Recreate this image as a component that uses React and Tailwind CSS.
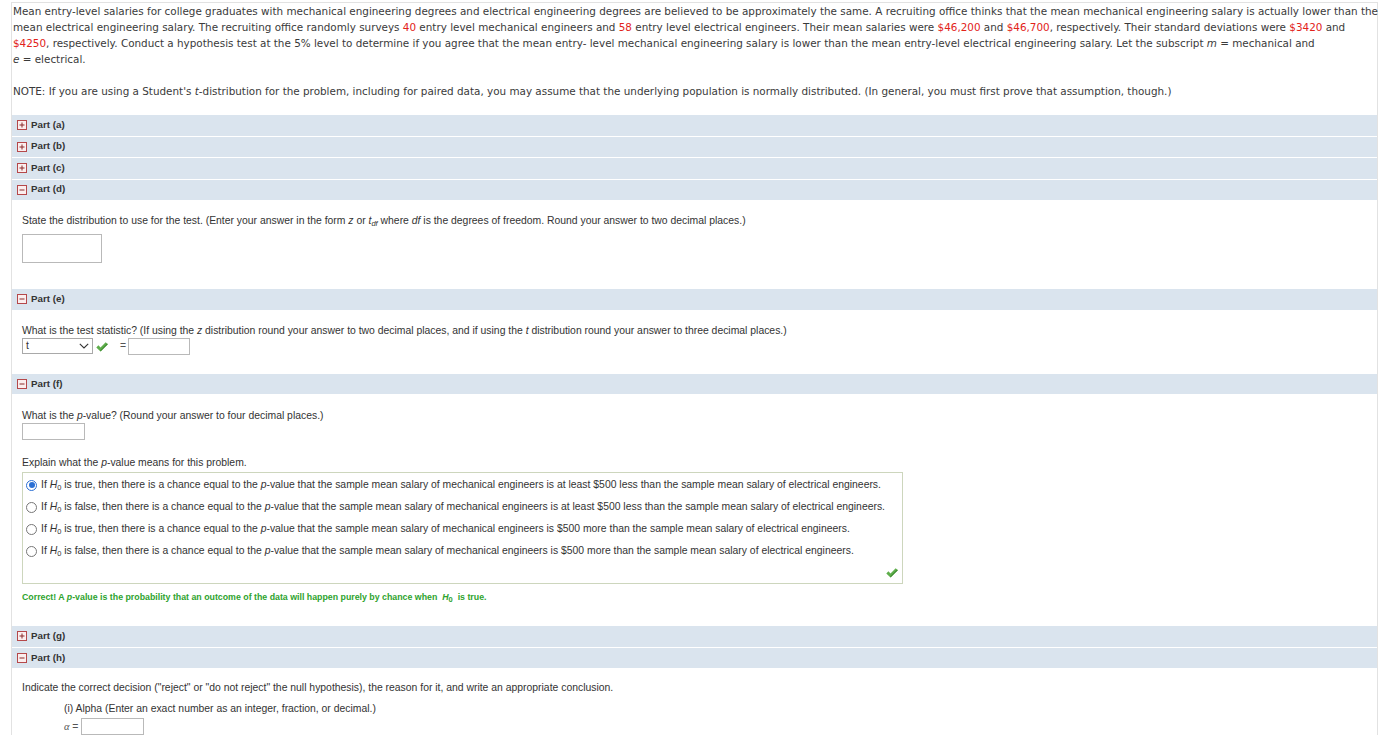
import React from 'react';

// colours and fonts picked from the screenshot
const VERDANA = "font-['DejaVu_Sans',Verdana,sans-serif]";
const ARIAL = "font-['Liberation_Sans',Arial,sans-serif]";

const Red = ({ children }) => <span className="text-[#e2231a]">{children}</span>;

function ToggleIcon({ open }) {
  return (
    <svg width="10" height="10" viewBox="0 0 10 10" className="shrink-0">
      <rect x="0.5" y="0.5" width="9" height="9" fill="#fbeeee" stroke="#b5484a" />
      <line x1="2.5" y1="5" x2="7.5" y2="5" stroke="#8a2b2b" strokeWidth="1" />
      {!open && <line x1="5" y1="2.5" x2="5" y2="7.5" stroke="#8a2b2b" strokeWidth="1" />}
    </svg>
  );
}

function PartBar({ label, open }) {
  return (
    <div className={`flex h-[21.5px] items-center gap-[4px] border-b border-white bg-[#dae4ee] pl-[5px] ${ARIAL} text-[9.75px] font-bold text-[#333]`}>
      <ToggleIcon open={open} />
      <span>Part ({label})</span>
    </div>
  );
}

function GreenCheck({ className = '' }) {
  return (
    <svg width="12" height="10" viewBox="0 0 12 10" className={className}>
      <path d="M0.3 5.4 L2.4 3.3 L4.5 5.4 L9.7 0.2 L11.8 2.3 L4.5 9.6 Z" fill="#5fae4c" />
      <path d="M4.5 9.6 L11.8 2.3 L11.1 1.6 L4.5 8.3 Z" fill="#3d8a2f" />
    </svg>
  );
}

const H0 = () => (
  <span className="italic">
    H<sub className="text-[7.5px] not-italic">0</sub>
  </span>
);

const Pv = () => <span className="italic">p</span>;

function Radio({ checked, children }) {
  return (
    <div className="flex h-[22px] items-center gap-[4px] pl-[3px]">
      {checked ? (
        <span className="flex h-[11px] w-[11px] items-center justify-center rounded-full border border-[#2a6fd4] bg-white">
          <span className="h-[6px] w-[6px] rounded-full bg-[#2a6fd4]" />
        </span>
      ) : (
        <span className="h-[11px] w-[11px] rounded-full border border-[#777] bg-white" />
      )}
      <span className="whitespace-nowrap">{children}</span>
    </div>
  );
}

const Input = ({ className }) => <div className={`border border-[#b9b9b9] bg-white ${className}`} />;

export default function App() {
  return (
    <div className="h-[745px] w-[1384px] overflow-hidden bg-white">
      <div className="ml-[11px] mt-[2px] w-[1367px] border-l border-r border-t border-[#e2e2e2]">
        {/* problem statement */}
        <div className={`${VERDANA} pl-[1px] text-[10.4px] leading-[16px] text-[#3a3a3a] whitespace-nowrap`}>
          <div>Mean entry-level salaries for college graduates with mechanical engineering degrees and electrical engineering degrees are believed to be approximately the same. A recruiting office thinks that the mean mechanical engineering salary is actually lower than the</div>
          <div>mean electrical engineering salary. The recruiting office randomly surveys <Red>40</Red> entry level mechanical engineers and <Red>58</Red> entry level electrical engineers. Their mean salaries were <Red>$46,200</Red> and <Red>$46,700</Red>, respectively. Their standard deviations were <Red>$3420</Red> and</div>
          <div><Red>$4250</Red>, respectively. Conduct a hypothesis test at the 5% level to determine if you agree that the mean entry- level mechanical engineering salary is lower than the mean entry-level electrical engineering salary. Let the subscript <i>m</i> = mechanical and</div>
          <div><i>e</i> = electrical.</div>
          <div className="mt-[16px]">NOTE: If you are using a Student's <i>t</i>-distribution for the problem, including for paired data, you may assume that the underlying population is normally distributed. (In general, you must first prove that assumption, though.)</div>
        </div>

        <div className="mt-[16px]">
          <PartBar label="a" />
          <PartBar label="b" />
          <PartBar label="c" />
          <PartBar label="d" open />
        </div>

        <div className={`${ARIAL} text-[10.4px] leading-[14px] text-[#333]`}>
          {/* part d */}
          <div className="px-[10px] pb-[26px] pt-[13px]">
            <div>
              State the distribution to use for the test. (Enter your answer in the form <i>z</i> or <i>t</i>
              <sub className="text-[7.5px]"><i>df</i></sub> where <i>df</i> is the degrees of freedom. Round your answer to two decimal places.)
            </div>
            <Input className="mt-[6px] h-[29px] w-[80px]" />
          </div>

          <PartBar label="e" open />
          <div className="px-[10px] pb-[19px] pt-[13px]">
            <div>
              What is the test statistic? (If using the <i>z</i> distribution round your answer to two decimal places, and if using the <i>t</i> distribution round your answer to three decimal places.)
            </div>
            <div className="flex h-[17px] items-center">
              <div className="flex h-[16px] w-[71px] items-center justify-between border border-[#a9a9a9] bg-white pl-[3px] pr-[3px]">
                <span className="leading-none">t</span>
                <svg width="10" height="6" viewBox="0 0 10 6">
                  <path d="M0.8 0.8 L5 5 L9.2 0.8" fill="none" stroke="#333" strokeWidth="1.1" />
                </svg>
              </div>
              <GreenCheck className="ml-[3px] mt-[2px]" />
              <span className="ml-[12px] text-[#555]">=</span>
              <Input className="ml-[2px] h-[17px] w-[62px]" />
            </div>
          </div>

          <PartBar label="f" open />
          <div className="px-[10px] pb-[22px] pt-[14px]">
            <div>What is the <Pv />-value? (Round your answer to four decimal places.)</div>
            <Input className="h-[17px] w-[63px]" />
            <div className="mt-[16px]">Explain what the <Pv />-value means for this problem.</div>
            <div className="mt-[2px] w-[881px] border border-[#cdd6bd] pt-[1px]">
              <Radio checked>
                If <H0 /> is true, then there is a chance equal to the <Pv />-value that the sample mean salary of mechanical engineers is at least $500 less than the sample mean salary of electrical engineers.
              </Radio>
              <Radio>
                If <H0 /> is false, then there is a chance equal to the <Pv />-value that the sample mean salary of mechanical engineers is at least $500 less than the sample mean salary of electrical engineers.
              </Radio>
              <Radio>
                If <H0 /> is true, then there is a chance equal to the <Pv />-value that the sample mean salary of mechanical engineers is $500 more than the sample mean salary of electrical engineers.
              </Radio>
              <Radio>
                If <H0 /> is false, then there is a chance equal to the <Pv />-value that the sample mean salary of mechanical engineers is $500 more than the sample mean salary of electrical engineers.
              </Radio>
              <div className="flex h-[21px] items-end justify-end pb-[5px] pr-[4px]">
                <GreenCheck />
              </div>
            </div>
            <div className="mt-[6px] text-[8.8px] font-bold text-[#2ea32e]">
              Correct! A <Pv />-value is the probability that an outcome of the data will happen purely by chance when&nbsp; <H0 />&nbsp; is true.
            </div>
          </div>

          <PartBar label="g" />
          <PartBar label="h" open />
          <div className="px-[10px] pt-[12px]">
            <div>Indicate the correct decision ("reject" or "do not reject" the null hypothesis), the reason for it, and write an appropriate conclusion.</div>
            <div className="ml-[42px] mt-[7px]">(i) Alpha (Enter an exact number as an integer, fraction, or decimal.)</div>
            <div className="ml-[42px] mt-[2px] flex h-[17px] items-center">
              <span className="text-[#555]"><i className="font-['Liberation_Serif',serif]">α</i> =</span>
              <Input className="ml-[3px] h-[17px] w-[63px]" />
            </div>
          </div>
        </div>
      </div>
    </div>
  );
}
